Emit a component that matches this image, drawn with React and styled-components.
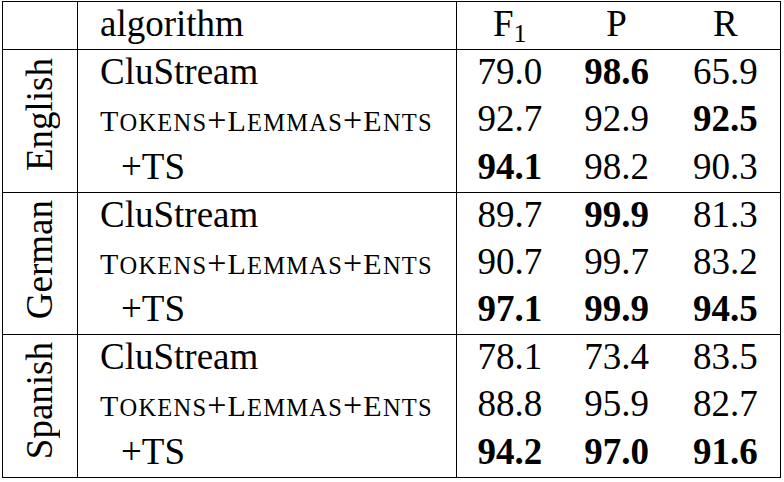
import React from "react";
import styled, { createGlobalStyle } from "styled-components";

const serif = `"Liberation Serif", "Times New Roman", serif`;

const GlobalStyle = createGlobalStyle`
  html, body {
    margin: 0;
    padding: 0;
    background: #fff;
  }
  body {
    font-family: ${serif};
    color: #000;
  }
`;

const Page = styled.div`
  padding: 1px 0 0 2px;
`;

const Table = styled.table`
  border-collapse: collapse;
  table-layout: fixed;
  width: 779px;
  font-family: ${serif};
  font-size: 37px;
  line-height: 40px;
  border: 1px solid #000;
`;

const Row = styled.tr`
  border-top: ${props => (props.first ? "1px solid #000" : "none")};
`;

const Cell = styled.td`
  box-sizing: border-box;
  height: ${props => props.h || 47.5}px;
  padding: 2px 0 0 ${props => props.pad || 0}px;
  vertical-align: ${props => (props.middle ? "middle" : "top")};
  text-align: ${props => props.align || "center"};
  border-right: ${props => (props.divider ? "1px solid #000" : "none")};
  font-family: ${serif};
  font-size: 37px;
  font-weight: ${props => (props.bold ? 700 : 400)};
  white-space: nowrap;
`;

const Text = styled.span`
  font-family: ${serif};
`;

const CapsText = styled.span`
  font-family: ${serif};
  font-size: 30px;
  letter-spacing: 1.2px;
`;

const SmallCap = styled.span`
  font-size: 24.5px;
`;

const Plus = styled.span`
  font-size: 34px;
`;

const LangLabel = styled.span`
  display: inline-block;
  font-family: ${serif};
  writing-mode: vertical-rl;
  transform: rotate(180deg);
  line-height: 40px;
  margin-top: ${props => props.shift || 0}px;
`;

const Sub = styled.sub`
  font-family: ${serif};
  font-size: 26px;
  vertical-align: -6px;
  line-height: 0;
`;

function Caps({ text }) {
  // LaTeX \textsc look: first letter of each word full size, rest smaller
  return (
    <CapsText>
      {text.split("+").map((word, i) => (
        <React.Fragment key={i}>
          {i > 0 && <Plus>+</Plus>}
          {word[0]}
          <SmallCap>{word.slice(1).toUpperCase()}</SmallCap>
        </React.Fragment>
      ))}
    </CapsText>
  );
}

const sections = [
  {
    lang: "English",
    shift: -6,
    rows: [
      { name: "CluStream", vals: ["79.0", "98.6", "65.9"], bold: [false, true, false] },
      { name: "Tokens+Lemmas+Ents", caps: true, vals: ["92.7", "92.9", "92.5"], bold: [false, false, true] },
      { name: "+TS", indent: true, vals: ["94.1", "98.2", "90.3"], bold: [true, false, false] },
    ],
  },
  {
    lang: "German",
    shift: -2,
    rows: [
      { name: "CluStream", vals: ["89.7", "99.9", "81.3"], bold: [false, true, false] },
      { name: "Tokens+Lemmas+Ents", caps: true, vals: ["90.7", "99.7", "83.2"], bold: [false, false, false] },
      { name: "+TS", indent: true, vals: ["97.1", "99.9", "94.5"], bold: [true, true, true] },
    ],
  },
  {
    lang: "Spanish",
    shift: -4,
    rows: [
      { name: "CluStream", vals: ["78.1", "73.4", "83.5"], bold: [false, false, false] },
      { name: "Tokens+Lemmas+Ents", caps: true, vals: ["88.8", "95.9", "82.7"], bold: [false, false, false] },
      { name: "+TS", indent: true, vals: ["94.2", "97.0", "91.6"], bold: [true, true, true] },
    ],
  },
];

export default function App() {
  return (
    <Page>
      <GlobalStyle />
      <Table>
        <colgroup>
          <col style={{ width: 75 }} />
          <col style={{ width: 379 }} />
          <col style={{ width: 106 }} />
          <col style={{ width: 108 }} />
          <col style={{ width: 110 }} />
        </colgroup>
        <thead>
          <Row>
            <Cell as="th" h={48} divider />
            <Cell as="th" h={48} divider align="left" pad={22}>
              <Text>algorithm</Text>
            </Cell>
            <Cell as="th" h={48}>
              <Text>F</Text>
              <Sub>1</Sub>
            </Cell>
            <Cell as="th" h={48}>
              <Text>P</Text>
            </Cell>
            <Cell as="th" h={48}>
              <Text>R</Text>
            </Cell>
          </Row>
        </thead>
        {sections.map(section => (
          <tbody key={section.lang}>
            {section.rows.map((row, i) => (
              <Row key={row.name} first={i === 0}>
                {i === 0 && (
                  <Cell rowSpan={3} middle divider h={142}>
                    <LangLabel shift={section.shift}>{section.lang}</LangLabel>
                  </Cell>
                )}
                <Cell divider align="left" pad={row.indent ? 43 : 22}>
                  {row.caps ? <Caps text={row.name} /> : <Text>{row.name}</Text>}
                </Cell>
                {row.vals.map((v, j) => (
                  <Cell key={j} bold={row.bold[j]}>
                    <Text>{v}</Text>
                  </Cell>
                ))}
              </Row>
            ))}
          </tbody>
        ))}
      </Table>
    </Page>
  );
}
